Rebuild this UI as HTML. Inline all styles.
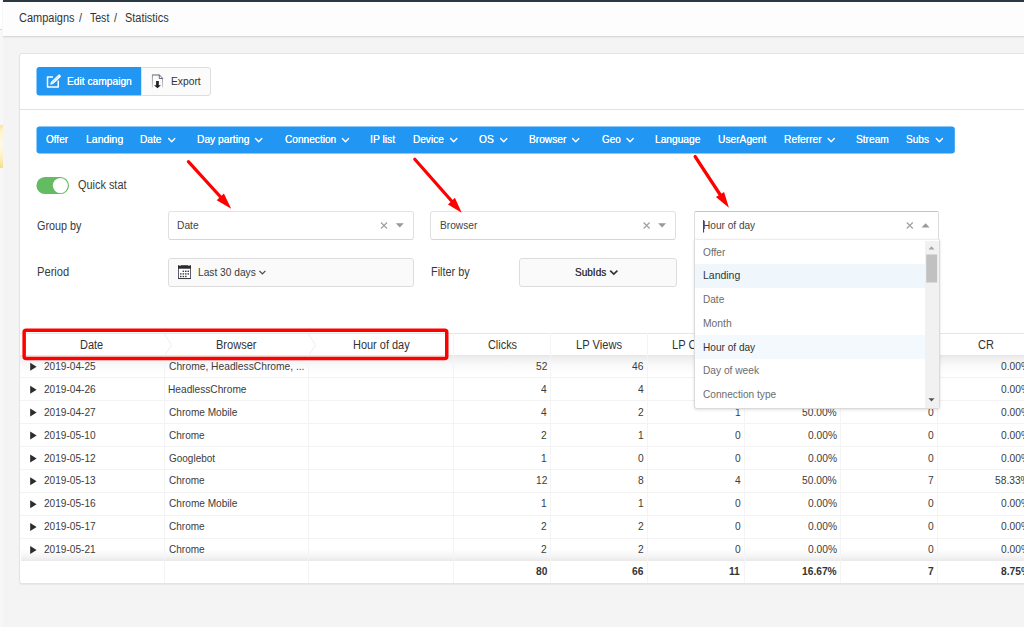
<!DOCTYPE html>
<html>
<head>
<meta charset="utf-8">
<title>Statistics</title>
<style>
html,body{margin:0;padding:0;overflow:hidden;}
html{width:1024px;height:627px;background:#f4f4f4;}
body{width:1024px;height:627px;overflow:hidden;position:relative;background:#f4f4f4;font-family:"Liberation Sans",sans-serif;}
.a{position:absolute;}
.t{position:absolute;white-space:pre;line-height:1;font-family:"Liberation Sans",sans-serif;}
.box{position:absolute;box-sizing:border-box;border:1px solid #ddd;border-radius:3px;}
.vl{position:absolute;width:1px;background:#f4f4f4;top:333px;height:250px;}
.hl{position:absolute;height:1px;background:#f3f3f3;left:20px;width:1004px;}
</style>
</head>
<body>
<!-- top dark bar -->
<div class="a" style="left:2px;top:0;width:1022px;height:2px;background:#2b3a42;"></div>
<!-- header / breadcrumb -->
<div class="a" style="left:0;top:2px;width:1024px;height:34px;background:#fdfdfd;"></div>
<div class="a" style="left:0;top:36px;width:1024px;height:1px;background:#d9d9d9;"></div>
<div class="a" style="left:0;top:37px;width:1024px;height:2px;background:linear-gradient(#e9e9e9,#f4f4f4);"></div>
<!-- left edge remnants -->
<div class="a" style="left:0;top:0;width:3px;height:627px;background:#f7f7f7;"></div>
<div class="a" style="left:0;top:0;width:2px;height:29px;background:#fff;"></div>
<div class="a" style="left:0;top:29px;width:2px;height:1px;background:#d8d8d8;"></div>
<div class="a" style="left:0;top:125px;width:3px;height:43px;background:linear-gradient(#fae59c,#fdf2c8 12%,#fffae6 45%,#fdf1c2 75%,#f8de84);"></div>

<!-- card -->
<div class="a" style="left:19px;top:53px;width:1010px;height:531px;background:#fff;border:1px solid #e3e3e3;border-radius:3px;box-sizing:border-box;box-shadow:0 1px 1px rgba(0,0,0,.05);"></div>
<div class="a" style="left:20px;top:109px;width:1004px;height:1px;background:#e2e2e2;"></div>

<!-- buttons -->
<svg class="a" style="left:0;top:0;" width="1024" height="627" viewBox="0 0 1024 627"><path d="M39.5 66.9 H141 V95.4 H39.5 a3 3 0 0 1 -3 -3 V69.9 a3 3 0 0 1 3 -3 Z" fill="#2196f3"/></svg>
<div class="box" style="left:141px;top:67px;width:69.5px;height:28.5px;background:#fbfbfb;border-radius:0 3px 3px 0;"></div>
<!-- edit + export icons -->
<svg class="a" style="left:0;top:0;" width="1024" height="627" viewBox="0 0 1024 627">
  <path d="M53 77 H47.5 V87.1 H58.2 V80.6" fill="none" stroke="#fff" stroke-width="1.5" stroke-linejoin="round"/>
  <path d="M50.2 84.8 L50.9 81.9 L58.4 74.7 a1 1 0 0 1 1.4 0 L60.6 75.6 a1 1 0 0 1 0 1.4 L53.1 84.1 Z" fill="#fff"/>
  <path d="M52.4 82.4 L58.6 76.4" stroke="#2196f3" stroke-width=".6" stroke-dasharray=".8 .8" fill="none"/>
  <defs><linearGradient id="fade" gradientUnits="userSpaceOnUse" x1="0" y1="75" x2="0" y2="88"><stop offset="0" stop-color="#8a7a9a"/><stop offset="1" stop-color="#cfcfcf"/></linearGradient></defs>
  <path d="M152 75 H159.4" stroke="#8e8e8e" stroke-width="1.4" fill="none"/>
  <path d="M152.4 75 V87.4" stroke="url(#fade)" stroke-width="0.9" fill="none"/>
  <path d="M162.5 78.6 V87.4" stroke="url(#fade)" stroke-width="0.9" fill="none"/>
  <path d="M159.3 74.8 V78.5 H162.8 Z" fill="#fff" stroke="#5a5a6a" stroke-width=".9" stroke-linejoin="round"/>
  <path d="M156.1 80.9 H158.8 V85.2 H160.9 L157.45 88.3 L154 85.2 H156.1 Z" fill="#222"/>
</svg>

<!-- nav bar -->
<svg class="a" style="left:0;top:0;" width="1024" height="627" viewBox="0 0 1024 627"><rect x="36.5" y="126.4" width="918.3" height="27.1" rx="3" fill="#2196f3"/></svg>
<svg class="a" style="left:0;top:0;" width="1024" height="627" viewBox="0 0 1024 627">
  <g fill="none" stroke="#fff" stroke-width="1.4" stroke-linecap="round" stroke-linejoin="round">
    <path d="M168.6 138.6 l3.1 3.1 l3.1 -3.1"/>
    <path d="M255.6 138.6 l3.1 3.1 l3.1 -3.1"/>
    <path d="M342.4 138.6 l3.1 3.1 l3.1 -3.1"/>
    <path d="M450.6 138.6 l3.1 3.1 l3.1 -3.1"/>
    <path d="M500.6 138.6 l3.1 3.1 l3.1 -3.1"/>
    <path d="M572.6 138.6 l3.1 3.1 l3.1 -3.1"/>
    <path d="M627.0 138.6 l3.1 3.1 l3.1 -3.1"/>
    <path d="M828.1 138.6 l3.1 3.1 l3.1 -3.1"/>
    <path d="M936.3 138.6 l3.1 3.1 l3.1 -3.1"/>
  </g>
</svg>

<!-- toggle -->
<svg class="a" style="left:0;top:0;" width="1024" height="627" viewBox="0 0 1024 627">
  <rect x="36.4" y="177" width="32.6" height="17.1" rx="8.55" fill="#63bc62"/>
  <circle cx="60.35" cy="185.6" r="7.6" fill="#fff"/>
  <circle cx="60.35" cy="185.6" r="7.9" fill="none" stroke="#5aa85a" stroke-opacity=".35" stroke-width=".6"/>
</svg>

<!-- selects -->
<div class="box" style="left:168px;top:211px;width:245.5px;height:28.5px;background:#fff;border-color:#e3e3e3 #e0e0e0 #d6d6d6;"></div>
<div class="box" style="left:430px;top:211px;width:245.5px;height:28.5px;background:#fff;border-color:#e3e3e3 #e0e0e0 #d6d6d6;"></div>
<div class="box" style="left:694px;top:211px;width:245px;height:29px;background:#fff;border-color:#c4c4c4 #dcdcdc transparent;border-radius:2px 2px 0 0;"></div>
<!-- period + subids -->
<div class="box" style="left:168px;top:258px;width:245.5px;height:28.5px;background:#fafafa;"></div>
<div class="box" style="left:519px;top:258px;width:157.5px;height:28.5px;background:#fafafa;"></div>

<!-- select icons -->
<svg class="a" style="left:0;top:0;" width="1024" height="627" viewBox="0 0 1024 627">
  <g stroke="#a2a2a2" stroke-width="1.25" fill="none">
    <path d="M381 222.5 l6 6 M387 222.5 l-6 6"/>
    <path d="M643.6 222.5 l6 6 M649.6 222.5 l-6 6"/>
    <path d="M906.8 222.5 l6 6 M912.8 222.5 l-6 6"/>
  </g>
  <g fill="#999">
    <path d="M395.8 223.3 h8 l-4 4.2 z"/>
    <path d="M658.1 223.3 h8 l-4 4.2 z"/>
    <path d="M921.6 227.5 h8 l-4 -4.2 z"/>
  </g>
  <!-- text cursor -->
  <rect x="703.1" y="220.1" width="1" height="12.4" fill="#333"/>
  <!-- chevrons: period + subids -->
  <path d="M259.4 270.9 l3 3 l3 -3" fill="none" stroke="#444" stroke-width="1.2"/>
  <path d="M610.2 270.6 l3.6 3.5 l3.6 -3.5" fill="none" stroke="#333" stroke-width="1.6"/>
</svg>

<!-- calendar icon -->
<svg class="a" style="left:0;top:0;" width="1024" height="627" viewBox="0 0 1024 627">
  <rect x="178.5" y="266.3" width="12" height="12.3" fill="#fff" stroke="#4d4a5e" stroke-width=".9"/>
  <rect x="178.05" y="265.9" width="12.9" height="2.8" fill="#2a2a2a"/>
  <rect x="178.05" y="265.3" width="1.3" height="1.2" fill="#2a2a2a"/>
  <rect x="189.65" y="265.3" width="1.3" height="1.2" fill="#2a2a2a"/>
  <rect x="180.8" y="265.2" width="7.4" height="1" fill="#3a3a3a"/>
  <rect x="178.05" y="278.1" width="12.9" height=".9" fill="#3a3a3a"/>
  <g fill="#3f3a4a"><rect x="182.60" y="270.60" width="1.5" height="1.4"/><rect x="185.05" y="270.60" width="1.5" height="1.4"/><rect x="187.50" y="270.60" width="1.5" height="1.4"/><rect x="180.00" y="273.20" width="1.5" height="1.4"/><rect x="182.60" y="273.20" width="1.5" height="1.4"/><rect x="185.05" y="273.20" width="1.5" height="1.4"/><rect x="187.50" y="273.20" width="1.5" height="1.4"/><rect x="180.00" y="275.80" width="1.5" height="1.4"/><rect x="182.60" y="275.80" width="1.5" height="1.4"/><rect x="185.05" y="275.80" width="1.5" height="1.4"/></g>
</svg>

<!-- table -->
<div class="hl" style="top:333px;background:#e6e6e6;"></div>
<div class="a" style="left:20px;top:355px;width:1004px;height:20px;background:linear-gradient(#e6e6e6,#f0f0f0 18%,#f8f8f8 45%,#fdfdfd 75%,#fff);"></div>
<div class="a" style="left:20.5px;top:549px;width:1004px;height:11.5px;background:linear-gradient(#fff,#f5f5f5 60%,#e9e9e9);"></div>
<div class="hl" style="top:377px;"></div>
<div class="hl" style="top:400px;"></div>
<div class="hl" style="top:423px;"></div>
<div class="hl" style="top:446px;"></div>
<div class="hl" style="top:469px;"></div>
<div class="hl" style="top:492px;"></div>
<div class="hl" style="top:515px;"></div>
<div class="hl" style="top:538px;"></div>
<div class="vl" style="left:164px;top:356px;height:227px;"></div>
<div class="vl" style="left:308px;top:356px;height:227px;"></div>
<div class="vl" style="left:453px;"></div>
<div class="vl" style="left:550px;"></div>
<div class="vl" style="left:647px;"></div>
<div class="vl" style="left:743.5px;"></div>
<div class="vl" style="left:840px;"></div>
<div class="vl" style="left:936.5px;"></div>
<!-- header group chevrons + row triangles -->
<svg class="a" style="left:0;top:0;" width="1024" height="627" viewBox="0 0 1024 627">
  <g fill="none" stroke="#efefef" stroke-width="1">
    <path d="M164.5 334 l7 11 l-7 11"/>
    <path d="M308.5 334 l7 11 l-7 11"/>
  </g>
  <g fill="#2c2c2c">
    <path d="M30.2 362.8 v8 l6.4 -4 z"/>
    <path d="M30.2 385.7 v8 l6.4 -4 z"/>
    <path d="M30.2 408.6 v8 l6.4 -4 z"/>
    <path d="M30.2 431.5 v8 l6.4 -4 z"/>
    <path d="M30.2 454.4 v8 l6.4 -4 z"/>
    <path d="M30.2 477.3 v8 l6.4 -4 z"/>
    <path d="M30.2 500.2 v8 l6.4 -4 z"/>
    <path d="M30.2 523.1 v8 l6.4 -4 z"/>
    <path d="M30.2 546.0 v8 l6.4 -4 z"/>
  </g>
</svg>

<!-- table text -->
<span class="t" style="left:80.10px;top:338.64px;font-size:12px;transform:scaleX(0.9147);transform-origin:0 0;color:#333;">Date</span>
<span class="t" style="left:216.20px;top:338.64px;font-size:12px;transform:scaleX(0.9197);transform-origin:0 0;color:#333;">Browser</span>
<span class="t" style="left:353.10px;top:338.64px;font-size:12px;transform:scaleX(0.9128);transform-origin:0 0;color:#333;">Hour of day</span>
<span class="t" style="left:488.26px;top:338.64px;font-size:12px;transform:scaleX(0.9073);transform-origin:0 0;color:#333;">Clicks</span>
<span class="t" style="left:576.19px;top:338.64px;font-size:12px;transform:scaleX(0.9280);transform-origin:0 0;color:#333;">LP Views</span>
<span class="t" style="left:672.49px;top:338.64px;font-size:12px;transform:scaleX(0.9282);transform-origin:0 0;color:#333;">LP Clicks</span>
<span class="t" style="left:977.65px;top:338.64px;font-size:12px;transform:scaleX(0.9149);transform-origin:0 0;color:#333;">CR</span>
<span class="t" style="left:44.10px;top:360.99px;font-size:11px;transform:scaleX(0.9174);transform-origin:0 0;color:#3c3c3c;">2019-04-25</span>
<span class="t" style="left:168.59px;top:360.99px;font-size:11px;transform:scaleX(0.9309);transform-origin:0 0;color:#3c3c3c;">Chrome, HeadlessChrome, ...</span>
<span class="t" style="left:535.74px;top:360.99px;font-size:11px;transform:scaleX(0.9300);transform-origin:0 0;color:#3c3c3c;">52</span>
<span class="t" style="left:632.46px;top:360.99px;font-size:11px;transform:scaleX(0.9300);transform-origin:0 0;color:#3c3c3c;">46</span>
<span class="t" style="left:1001.16px;top:360.99px;font-size:11px;transform:scaleX(0.9300);transform-origin:0 0;color:#3c3c3c;">0.00%</span>
<span class="t" style="left:44.10px;top:383.89px;font-size:11px;transform:scaleX(0.9178);transform-origin:0 0;color:#3c3c3c;">2019-04-26</span>
<span class="t" style="left:168.27px;top:383.89px;font-size:11px;transform:scaleX(0.9236);transform-origin:0 0;color:#3c3c3c;">HeadlessChrome</span>
<span class="t" style="left:541.21px;top:383.89px;font-size:11px;transform:scaleX(0.9300);transform-origin:0 0;color:#3c3c3c;">4</span>
<span class="t" style="left:638.01px;top:383.89px;font-size:11px;transform:scaleX(0.9300);transform-origin:0 0;color:#3c3c3c;">4</span>
<span class="t" style="left:1001.16px;top:383.89px;font-size:11px;transform:scaleX(0.9300);transform-origin:0 0;color:#3c3c3c;">0.00%</span>
<span class="t" style="left:44.09px;top:406.79px;font-size:11px;transform:scaleX(0.9191);transform-origin:0 0;color:#3c3c3c;">2019-04-27</span>
<span class="t" style="left:168.60px;top:406.79px;font-size:11px;transform:scaleX(0.9178);transform-origin:0 0;color:#3c3c3c;">Chrome Mobile</span>
<span class="t" style="left:541.21px;top:406.79px;font-size:11px;transform:scaleX(0.9300);transform-origin:0 0;color:#3c3c3c;">4</span>
<span class="t" style="left:638.22px;top:406.79px;font-size:11px;transform:scaleX(0.9300);transform-origin:0 0;color:#3c3c3c;">2</span>
<span class="t" style="left:735.00px;top:406.79px;font-size:11px;transform:scaleX(0.9300);transform-origin:0 0;color:#3c3c3c;">1</span>
<span class="t" style="left:802.47px;top:406.79px;font-size:11px;transform:scaleX(0.9300);transform-origin:0 0;color:#3c3c3c;">50.00%</span>
<span class="t" style="left:928.10px;top:406.79px;font-size:11px;transform:scaleX(0.9300);transform-origin:0 0;color:#3c3c3c;">0</span>
<span class="t" style="left:1001.16px;top:406.79px;font-size:11px;transform:scaleX(0.9300);transform-origin:0 0;color:#3c3c3c;">0.00%</span>
<span class="t" style="left:44.10px;top:429.69px;font-size:11px;transform:scaleX(0.9169);transform-origin:0 0;color:#3c3c3c;">2019-05-10</span>
<span class="t" style="left:168.60px;top:429.69px;font-size:11px;transform:scaleX(0.9109);transform-origin:0 0;color:#3c3c3c;">Chrome</span>
<span class="t" style="left:541.42px;top:429.69px;font-size:11px;transform:scaleX(0.9300);transform-origin:0 0;color:#3c3c3c;">2</span>
<span class="t" style="left:638.20px;top:429.69px;font-size:11px;transform:scaleX(0.9300);transform-origin:0 0;color:#3c3c3c;">1</span>
<span class="t" style="left:734.90px;top:429.69px;font-size:11px;transform:scaleX(0.9300);transform-origin:0 0;color:#3c3c3c;">0</span>
<span class="t" style="left:808.16px;top:429.69px;font-size:11px;transform:scaleX(0.9300);transform-origin:0 0;color:#3c3c3c;">0.00%</span>
<span class="t" style="left:928.10px;top:429.69px;font-size:11px;transform:scaleX(0.9300);transform-origin:0 0;color:#3c3c3c;">0</span>
<span class="t" style="left:1001.16px;top:429.69px;font-size:11px;transform:scaleX(0.9300);transform-origin:0 0;color:#3c3c3c;">0.00%</span>
<span class="t" style="left:44.09px;top:452.59px;font-size:11px;transform:scaleX(0.9191);transform-origin:0 0;color:#3c3c3c;">2019-05-12</span>
<span class="t" style="left:168.60px;top:452.59px;font-size:11px;transform:scaleX(0.9075);transform-origin:0 0;color:#3c3c3c;">Googlebot</span>
<span class="t" style="left:541.40px;top:452.59px;font-size:11px;transform:scaleX(0.9300);transform-origin:0 0;color:#3c3c3c;">1</span>
<span class="t" style="left:638.10px;top:452.59px;font-size:11px;transform:scaleX(0.9300);transform-origin:0 0;color:#3c3c3c;">0</span>
<span class="t" style="left:734.90px;top:452.59px;font-size:11px;transform:scaleX(0.9300);transform-origin:0 0;color:#3c3c3c;">0</span>
<span class="t" style="left:808.16px;top:452.59px;font-size:11px;transform:scaleX(0.9300);transform-origin:0 0;color:#3c3c3c;">0.00%</span>
<span class="t" style="left:928.10px;top:452.59px;font-size:11px;transform:scaleX(0.9300);transform-origin:0 0;color:#3c3c3c;">0</span>
<span class="t" style="left:1001.16px;top:452.59px;font-size:11px;transform:scaleX(0.9300);transform-origin:0 0;color:#3c3c3c;">0.00%</span>
<span class="t" style="left:44.10px;top:475.49px;font-size:11px;transform:scaleX(0.9178);transform-origin:0 0;color:#3c3c3c;">2019-05-13</span>
<span class="t" style="left:168.60px;top:475.49px;font-size:11px;transform:scaleX(0.9109);transform-origin:0 0;color:#3c3c3c;">Chrome</span>
<span class="t" style="left:535.74px;top:475.49px;font-size:11px;transform:scaleX(0.9300);transform-origin:0 0;color:#3c3c3c;">12</span>
<span class="t" style="left:638.15px;top:475.49px;font-size:11px;transform:scaleX(0.9300);transform-origin:0 0;color:#3c3c3c;">8</span>
<span class="t" style="left:734.81px;top:475.49px;font-size:11px;transform:scaleX(0.9300);transform-origin:0 0;color:#3c3c3c;">4</span>
<span class="t" style="left:802.47px;top:475.49px;font-size:11px;transform:scaleX(0.9300);transform-origin:0 0;color:#3c3c3c;">50.00%</span>
<span class="t" style="left:928.22px;top:475.49px;font-size:11px;transform:scaleX(0.9300);transform-origin:0 0;color:#3c3c3c;">7</span>
<span class="t" style="left:995.47px;top:475.49px;font-size:11px;transform:scaleX(0.9300);transform-origin:0 0;color:#3c3c3c;">58.33%</span>
<span class="t" style="left:44.10px;top:498.39px;font-size:11px;transform:scaleX(0.9178);transform-origin:0 0;color:#3c3c3c;">2019-05-16</span>
<span class="t" style="left:168.60px;top:498.39px;font-size:11px;transform:scaleX(0.9178);transform-origin:0 0;color:#3c3c3c;">Chrome Mobile</span>
<span class="t" style="left:541.40px;top:498.39px;font-size:11px;transform:scaleX(0.9300);transform-origin:0 0;color:#3c3c3c;">1</span>
<span class="t" style="left:638.20px;top:498.39px;font-size:11px;transform:scaleX(0.9300);transform-origin:0 0;color:#3c3c3c;">1</span>
<span class="t" style="left:734.90px;top:498.39px;font-size:11px;transform:scaleX(0.9300);transform-origin:0 0;color:#3c3c3c;">0</span>
<span class="t" style="left:808.16px;top:498.39px;font-size:11px;transform:scaleX(0.9300);transform-origin:0 0;color:#3c3c3c;">0.00%</span>
<span class="t" style="left:928.10px;top:498.39px;font-size:11px;transform:scaleX(0.9300);transform-origin:0 0;color:#3c3c3c;">0</span>
<span class="t" style="left:1001.16px;top:498.39px;font-size:11px;transform:scaleX(0.9300);transform-origin:0 0;color:#3c3c3c;">0.00%</span>
<span class="t" style="left:44.09px;top:521.29px;font-size:11px;transform:scaleX(0.9191);transform-origin:0 0;color:#3c3c3c;">2019-05-17</span>
<span class="t" style="left:168.60px;top:521.29px;font-size:11px;transform:scaleX(0.9109);transform-origin:0 0;color:#3c3c3c;">Chrome</span>
<span class="t" style="left:541.42px;top:521.29px;font-size:11px;transform:scaleX(0.9300);transform-origin:0 0;color:#3c3c3c;">2</span>
<span class="t" style="left:638.22px;top:521.29px;font-size:11px;transform:scaleX(0.9300);transform-origin:0 0;color:#3c3c3c;">2</span>
<span class="t" style="left:734.90px;top:521.29px;font-size:11px;transform:scaleX(0.9300);transform-origin:0 0;color:#3c3c3c;">0</span>
<span class="t" style="left:808.16px;top:521.29px;font-size:11px;transform:scaleX(0.9300);transform-origin:0 0;color:#3c3c3c;">0.00%</span>
<span class="t" style="left:928.10px;top:521.29px;font-size:11px;transform:scaleX(0.9300);transform-origin:0 0;color:#3c3c3c;">0</span>
<span class="t" style="left:1001.16px;top:521.29px;font-size:11px;transform:scaleX(0.9300);transform-origin:0 0;color:#3c3c3c;">0.00%</span>
<span class="t" style="left:44.09px;top:544.19px;font-size:11px;transform:scaleX(0.9187);transform-origin:0 0;color:#3c3c3c;">2019-05-21</span>
<span class="t" style="left:168.60px;top:544.19px;font-size:11px;transform:scaleX(0.9109);transform-origin:0 0;color:#3c3c3c;">Chrome</span>
<span class="t" style="left:541.42px;top:544.19px;font-size:11px;transform:scaleX(0.9300);transform-origin:0 0;color:#3c3c3c;">2</span>
<span class="t" style="left:638.22px;top:544.19px;font-size:11px;transform:scaleX(0.9300);transform-origin:0 0;color:#3c3c3c;">2</span>
<span class="t" style="left:734.90px;top:544.19px;font-size:11px;transform:scaleX(0.9300);transform-origin:0 0;color:#3c3c3c;">0</span>
<span class="t" style="left:808.16px;top:544.19px;font-size:11px;transform:scaleX(0.9300);transform-origin:0 0;color:#3c3c3c;">0.00%</span>
<span class="t" style="left:928.10px;top:544.19px;font-size:11px;transform:scaleX(0.9300);transform-origin:0 0;color:#3c3c3c;">0</span>
<span class="t" style="left:1001.16px;top:544.19px;font-size:11px;transform:scaleX(0.9300);transform-origin:0 0;color:#3c3c3c;">0.00%</span>
<span class="t" style="left:535.63px;top:565.89px;font-size:11px;transform:scaleX(0.9300);transform-origin:0 0;color:#333;font-weight:700;">80</span>
<span class="t" style="left:632.38px;top:565.89px;font-size:11px;transform:scaleX(0.9300);transform-origin:0 0;color:#333;font-weight:700;">66</span>
<span class="t" style="left:728.86px;top:565.89px;font-size:11px;transform:scaleX(0.9300);transform-origin:0 0;color:#333;font-weight:700;">11</span>
<span class="t" style="left:802.38px;top:565.89px;font-size:11px;transform:scaleX(0.9300);transform-origin:0 0;color:#333;font-weight:700;">16.67%</span>
<span class="t" style="left:927.95px;top:565.89px;font-size:11px;transform:scaleX(0.9300);transform-origin:0 0;color:#333;font-weight:700;">7</span>
<span class="t" style="left:1001.06px;top:565.89px;font-size:11px;transform:scaleX(0.9300);transform-origin:0 0;color:#333;font-weight:700;">8.75%</span>

<!-- dropdown menu -->
<div class="a" style="left:694px;top:239px;width:246px;height:169.7px;box-sizing:border-box;background:#fff;border:1px solid #dadada;border-top-color:#ececec;border-radius:0 0 3px 3px;box-shadow:0 1px 3px rgba(0,0,0,.12);"></div>
<div class="a" style="left:695px;top:264px;width:230px;height:23.5px;background:#f0f7fc;"></div>
<div class="a" style="left:695px;top:335px;width:230px;height:23.7px;background:#f4f9fd;"></div>
<div class="a" style="left:925px;top:240.5px;width:14px;height:167.2px;background:#f1f1f1;"></div>
<svg class="a" style="left:0;top:0;" width="1024" height="627" viewBox="0 0 1024 627"><rect x="926.2" y="254.5" width="10.9" height="28" fill="#c1c1c1"/></svg>
<svg class="a" style="left:925.3px;top:240px;" width="13" height="167" viewBox="0 0 13 167">
  <path d="M3.5 9.5 h6 l-3 -3.2 z" fill="#a3a3a3"/>
  <path d="M3.5 158.2 h6 l-3 3.2 z" fill="#505050"/>
</svg>

<!-- other text -->
<span class="t" style="left:19.05px;top:11.84px;font-size:12px;transform:scaleX(0.9151);transform-origin:0 0;color:#333;">Campaigns</span>
<span class="t" style="left:79.20px;top:11.84px;font-size:12px;transform:scaleX(0.8993);transform-origin:0 0;color:#333;">/</span>
<span class="t" style="left:89.87px;top:11.84px;font-size:12px;transform:scaleX(0.8772);transform-origin:0 0;color:#333;">Test</span>
<span class="t" style="left:113.80px;top:11.84px;font-size:12px;transform:scaleX(0.8993);transform-origin:0 0;color:#333;">/</span>
<span class="t" style="left:124.51px;top:11.84px;font-size:12px;transform:scaleX(0.9099);transform-origin:0 0;color:#333;">Statistics</span>
<span class="t" style="left:66.56px;top:75.69px;font-size:11px;transform:scaleX(0.9295);transform-origin:0 0;color:#fff;text-shadow:0 0 .5px #fff;">Edit campaign</span>
<span class="t" style="left:170.66px;top:75.69px;font-size:11px;transform:scaleX(0.9347);transform-origin:0 0;color:#333;">Export</span>
<span class="t" style="left:46.13px;top:134.19px;font-size:11px;transform:scaleX(0.9082);transform-origin:0 0;color:#fff;text-shadow:0 0 .3px #fff;">Offer</span>
<span class="t" style="left:85.54px;top:134.19px;font-size:11px;transform:scaleX(0.9509);transform-origin:0 0;color:#fff;text-shadow:0 0 .3px #fff;">Landing</span>
<span class="t" style="left:140.37px;top:134.19px;font-size:11px;transform:scaleX(0.9201);transform-origin:0 0;color:#fff;text-shadow:0 0 .3px #fff;">Date</span>
<span class="t" style="left:196.76px;top:134.19px;font-size:11px;transform:scaleX(0.9314);transform-origin:0 0;color:#fff;text-shadow:0 0 .3px #fff;">Day parting</span>
<span class="t" style="left:284.69px;top:134.19px;font-size:11px;transform:scaleX(0.9210);transform-origin:0 0;color:#fff;text-shadow:0 0 .3px #fff;">Connection</span>
<span class="t" style="left:369.55px;top:134.19px;font-size:11px;transform:scaleX(0.9411);transform-origin:0 0;color:#fff;text-shadow:0 0 .3px #fff;">IP list</span>
<span class="t" style="left:412.77px;top:134.19px;font-size:11px;transform:scaleX(0.9150);transform-origin:0 0;color:#fff;text-shadow:0 0 .3px #fff;">Device</span>
<span class="t" style="left:478.92px;top:134.19px;font-size:11px;transform:scaleX(0.9272);transform-origin:0 0;color:#fff;text-shadow:0 0 .3px #fff;">OS</span>
<span class="t" style="left:528.66px;top:134.19px;font-size:11px;transform:scaleX(0.9269);transform-origin:0 0;color:#fff;text-shadow:0 0 .3px #fff;">Browser</span>
<span class="t" style="left:601.71px;top:134.19px;font-size:11px;transform:scaleX(0.8995);transform-origin:0 0;color:#fff;text-shadow:0 0 .3px #fff;">Geo</span>
<span class="t" style="left:654.66px;top:134.19px;font-size:11px;transform:scaleX(0.9274);transform-origin:0 0;color:#fff;text-shadow:0 0 .3px #fff;">Language</span>
<span class="t" style="left:717.81px;top:134.19px;font-size:11px;transform:scaleX(0.9285);transform-origin:0 0;color:#fff;text-shadow:0 0 .3px #fff;">UserAgent</span>
<span class="t" style="left:783.56px;top:134.19px;font-size:11px;transform:scaleX(0.9346);transform-origin:0 0;color:#fff;text-shadow:0 0 .3px #fff;">Referrer</span>
<span class="t" style="left:855.64px;top:134.19px;font-size:11px;transform:scaleX(0.9257);transform-origin:0 0;color:#fff;text-shadow:0 0 .3px #fff;">Stream</span>
<span class="t" style="left:906.45px;top:134.19px;font-size:11px;transform:scaleX(0.9141);transform-origin:0 0;color:#fff;text-shadow:0 0 .3px #fff;">Subs</span>
<span class="t" style="left:77.99px;top:179.04px;font-size:12px;transform:scaleX(0.9088);transform-origin:0 0;color:#3a3a3a;">Quick stat</span>
<span class="t" style="left:36.96px;top:219.84px;font-size:12px;transform:scaleX(0.9008);transform-origin:0 0;color:#3a3a3a;">Group by</span>
<span class="t" style="left:36.59px;top:266.44px;font-size:12px;transform:scaleX(0.9290);transform-origin:0 0;color:#3a3a3a;">Period</span>
<span class="t" style="left:431.11px;top:266.44px;font-size:12px;transform:scaleX(0.9049);transform-origin:0 0;color:#3a3a3a;">Filter by</span>
<span class="t" style="left:177.26px;top:219.59px;font-size:11px;transform:scaleX(0.9292);transform-origin:0 0;color:#444;">Date</span>
<span class="t" style="left:440.46px;top:219.59px;font-size:11px;transform:scaleX(0.9269);transform-origin:0 0;color:#444;">Browser</span>
<span class="t" style="left:703.37px;top:219.59px;font-size:11px;transform:scaleX(0.9171);transform-origin:0 0;color:#444;">Hour of day</span>
<span class="t" style="left:197.56px;top:266.59px;font-size:11px;transform:scaleX(0.9268);transform-origin:0 0;color:#3a3a3a;">Last 30 days</span>
<span class="t" style="left:575.25px;top:266.79px;font-size:11px;transform:scaleX(0.9115);transform-origin:0 0;color:#333;text-shadow:0 0 .1px #555;">SubIds</span>
<span class="t" style="left:703.42px;top:246.59px;font-size:11px;transform:scaleX(0.9210);transform-origin:0 0;color:#6c6c6c;">Offer</span>
<span class="t" style="left:703.04px;top:270.29px;font-size:11px;transform:scaleX(0.9509);transform-origin:0 0;color:#333;">Landing</span>
<span class="t" style="left:703.07px;top:294.09px;font-size:11px;transform:scaleX(0.9155);transform-origin:0 0;color:#6c6c6c;">Date</span>
<span class="t" style="left:703.05px;top:317.79px;font-size:11px;transform:scaleX(0.9391);transform-origin:0 0;color:#6c6c6c;">Month</span>
<span class="t" style="left:703.07px;top:341.59px;font-size:11px;transform:scaleX(0.9171);transform-origin:0 0;color:#333;">Hour of day</span>
<span class="t" style="left:703.07px;top:365.29px;font-size:11px;transform:scaleX(0.9255);transform-origin:0 0;color:#6c6c6c;">Day of week</span>
<span class="t" style="left:703.39px;top:389.09px;font-size:11px;transform:scaleX(0.9202);transform-origin:0 0;color:#6c6c6c;">Connection type</span>

<!-- annotations: red arrows + red box -->
<svg class="a" style="left:0;top:0;" width="1024" height="627" viewBox="0 0 1024 627">
  <g stroke="#ff0000" stroke-width="3.2" stroke-linecap="round" fill="none">
    <path d="M188.4 161.7 L222 198.5"/>
    <path d="M414.8 159.2 L452.5 202"/>
    <path d="M695.1 156.5 L721 196"/>
  </g>
  <g fill="#ff0000">
    <path d="M231.2 208.8 L216.7 200.2 L223.9 193.5 Z"/>
    <path d="M461.7 212.8 L448 204.4 L454.9 197.8 Z"/>
    <path d="M728.9 207.8 L715.9 197.1 L724.1 191.9 Z"/>
  </g>
  <rect x="24.15" y="330.35" width="422.6" height="28.2" rx="2" ry="2" fill="none" stroke="#ff0000" stroke-width="3.5"/>
</svg>
</body>
</html>
